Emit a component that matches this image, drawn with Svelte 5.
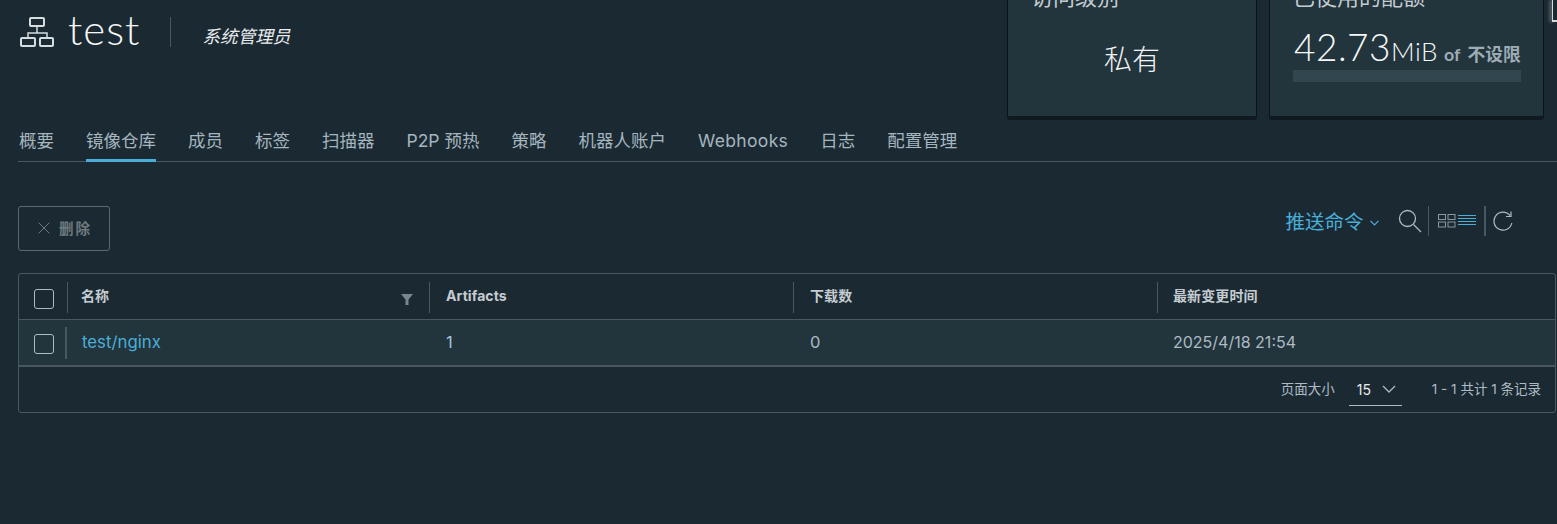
<script>
  const tabs = ['概要', '镜像仓库', '成员', '标签', '扫描器', 'P2P 预热', '策略', '机器人账户', 'Webhooks', '日志', '配置管理'];
  const rows = [{ name: 'test/nginx', artifacts: 1, pulls: 0, time: '2025/4/18 21:54' }];
</script>

<div class="page">
  <header class="head">
    <div class="title">
      <svg class="project-icon" width="34" height="30" viewBox="0 0 34 30" fill="none" stroke="#d5dde0" stroke-width="2">
        <rect x="10" y="1" width="14" height="8" rx="1" />
        <rect x="1" y="21" width="14" height="8" rx="1" />
        <rect x="20" y="21" width="13" height="8" rx="1" />
        <path d="M17 9v7M8 21v-5h19v5" stroke-width="1.500" />
      </svg>
      <h1>test</h1>
      <span class="sep"></span>
      <span class="role">系统管理员</span>
    </div>
    <div class="cards">
      <div class="card access">
        <div class="card-label">访问级别</div>
        <div class="card-value">私有</div>
      </div>
      <div class="card quota">
        <div class="card-label">已使用的配额</div>
        <div class="usage"><span class="num">42.73</span><span class="unit">MiB</span> <span class="of">of</span> <span class="limit">不设限</span></div>
        <div class="bar"></div>
      </div>
    </div>
    <div class="corner"></div>
  </header>

  <nav class="tabs">
    {#each tabs as t, i}
      <span class="tab" class:active={i === 1} class:latin={t === 'Webhooks'}>{t}</span>
    {/each}
  </nav>

  <div class="toolbar">
    <button class="del" disabled>
      <svg width="12" height="12" viewBox="0 0 12 12" stroke="#6e7a80" stroke-width="1"><path d="M0.500 0.500l11 11M11.500 0.500l-11 11" /></svg>
      <span>删除</span>
    </button>
    <div class="tools">
      <span class="push">推送命令
        <svg width="9" height="6" viewBox="0 0 9 6" fill="none" stroke="#4aaed9" stroke-width="1.200"><path d="M0.500 0.800l4 4 4-4" /></svg>
      </span>
      <svg class="search" width="24" height="24" viewBox="0 0 24 24" fill="none" stroke="#adbbc4" stroke-width="1.300"><circle cx="9.500" cy="9.500" r="8" /><path d="M15.500 15.500l7.500 7.500" /></svg>
      <span class="vr"></span>
      <svg class="grid" width="18" height="14" viewBox="0 0 18 14" fill="none" stroke="#8a979e" stroke-width="1"><rect x="0.500" y="0.500" width="7" height="5" /><rect x="10" y="0.500" width="7" height="5" /><rect x="0.500" y="8" width="7" height="5" /><rect x="10" y="8" width="7" height="5" /></svg>
      <svg class="list" width="18" height="14" viewBox="0 0 18 14" stroke="#4aaed9" stroke-width="1"><path d="M0 1.500h18M0 4.500h18M0 7.500h18M0 10.500h18" /></svg>
      <span class="vr wide"></span>
      <svg class="refresh" width="20" height="20" viewBox="0 0 20 20" fill="none" stroke="#adbbc4" stroke-width="1.200"><path d="M17 4.500A9 9 0 1 0 18.800 12" /><path d="M18 0.500v5h-5" /></svg>
    </div>
  </div>

  <div class="grid-wrap">
    <div class="row head-row">
      <div class="cell check"><span class="box"></span></div>
      <div class="cell name sepd">名称
        <svg class="filter" width="12" height="11" viewBox="0 0 12 11" fill="#7b868c"><path d="M0 0h12L7.500 5.500V11h-3V5.500z" /></svg>
      </div>
      <div class="cell col sepd">Artifacts</div>
      <div class="cell col sepd">下载数</div>
      <div class="cell col last sepd">最新变更时间</div>
    </div>
    {#each rows as r}
      <div class="row body-row">
        <div class="cell check"><span class="box"></span><span class="thick"></span></div>
        <div class="cell name link">{r.name}</div>
        <div class="cell col count">{r.artifacts}</div>
        <div class="cell col">{r.pulls}</div>
        <div class="cell col last">{r.time}</div>
      </div>
    {/each}
    <div class="foot">
      <span>页面大小</span>
      <span class="size">15
        <svg width="14" height="8" viewBox="0 0 14 8" fill="none" stroke="#adbbc4" stroke-width="1.300"><path d="M1 1l6 6 6-6" /></svg>
      </span>
      <span>1 - 1 共计 1 条记录</span>
    </div>
  </div>
</div>

<style>
  :global(body) {
    background: #1b2a32;
    overflow: hidden;
  }

  .page {
    height: 524px;
    padding: 0 0 0 18px;
    box-sizing: border-box;
    font-family: Inter, 'Noto Sans CJK SC', sans-serif;
    color: #adbbc4;
    overflow: hidden;
  }

  .head {
    height: 118px;
    display: flex;
    justify-content: space-between;
    position: relative;
  }

  .title {
    display: flex;
    align-items: flex-start;
    padding-top: 15px;
  }

  .project-icon {
    margin: 2px 0 0 2px;
  }

  h1 {
    margin: -3px 0 0 14px;
    font-family: Lato, 'Noto Sans CJK SC', sans-serif;
    font-size: 42px;
    font-weight: 300;
    line-height: 34px;
    color: #f5f7f8;
    letter-spacing: 1px;
  }

  .sep {
    width: 1px;
    height: 30px;
    margin: 2px 0 0 30px;
    background: #485860;
  }

  .role {
    margin: 10px 0 0 31px;
    font-size: 17.600px;
    font-style: italic;
    line-height: 24px;
    color: #e9ecef;
  }

  .cards {
    display: flex;
    gap: 12px;
    margin-right: 13px;
    margin-top: -24px;
    height: 141px;
  }

  .card {
    background: #22343c;
    border: 1px solid #0c1419;
    border-top: none;
    border-bottom: 4px solid #0f1a20;
    border-radius: 3px;
    box-sizing: border-box;
    height: 144px;
    padding: 0 23px;
  }

  .access {
    width: 250px;
  }

  .quota {
    width: 275px;
    padding: 0 22px 0 23px;
  }

  .card-label {
    font-size: 22px;
    line-height: 24px;
    margin-top: 9px;
    color: #c5ccd1;
    white-space: nowrap;
  }

  .card-value {
    margin-top: 31px;
    text-align: center;
    font-size: 28px;
    line-height: 40px;
    color: #f0f2f4;
    font-weight: 300;
  }

  .usage {
    margin-top: 18px;
    height: 43px;
    white-space: nowrap;
    line-height: 40px;
    font-family: Lato, 'Noto Sans CJK SC', sans-serif;
    color: #f5f7f8;
  }

  .num {
    margin-left: 1px;
    font-size: 37px;
    font-weight: 300;
    letter-spacing: 0.500px;
  }

  .unit {
    font-size: 26px;
    font-weight: 300;
    letter-spacing: 0.500px;
  }

  .of {
    margin-left: 2px;
  }

  .limit {
    margin-left: 3px;
  }

  .of, .limit {
    font-size: 17.800px;
    font-weight: 700;
    color: #9eacb5;
  }

  .bar {
    height: 12px;
    background: #324650;
  }

  .corner {
    position: absolute;
    right: 0;
    top: 0;
    width: 4px;
    height: 20px;
    border-left: 1px solid #d8d8d8;
    border-bottom: 2px solid #d8d8d8;
    box-shadow: -3px 0 3px rgba(216, 216, 216, 0.25);
  }

  .tabs {
    display: flex;
    gap: 32px;
    height: 43px;
    padding-left: 1px;
    border-bottom: 1px solid #485860;
  }

  .tab {
    height: 44px;
    box-sizing: border-box;
    font-size: 17.500px;
    line-height: 46px;
    color: #a5b5bf;
    white-space: nowrap;
  }

  .tab.latin {
    letter-spacing: 0.350px;
  }

  .tab.active {
    border-bottom: 3px solid #4aaed9;
  }

  .toolbar {
    display: flex;
    justify-content: space-between;
    align-items: flex-start;
    height: 67px;
    margin-top: 44px;
    padding-right: 44px;
  }

  .del {
    display: flex;
    align-items: center;
    gap: 9px;
    width: 92px;
    height: 45px;
    padding: 0 0 2px 19px;
    background: transparent;
    border: 1px solid #5b6a72;
    border-radius: 3px;
    font-family: inherit;
    font-size: 14.500px;
    font-weight: 600;
    letter-spacing: 2px;
    color: #6e7a80;
  }

  .tools {
    display: flex;
    align-items: center;
    height: 30px;
    margin-top: 0;
  }

  .push {
    font-size: 19.500px;
    color: #4aaed9;
    margin-right: 19px;
    margin-top: -2px;
  }

  .push svg {
    margin-left: 1px;
    vertical-align: 3px;
  }

  .search {
    margin-right: 6px;
  }

  .vr {
    width: 1px;
    height: 30px;
    background: #485860;
    margin-right: 9px;
  }

  .grid {
    margin-right: 2px;
  }

  .list {
    margin-right: 8px;
  }

  .vr.wide {
    width: 2px;
    margin-right: 7px;
  }

  .grid-wrap {
    margin-right: 1px;
    border: 1px solid #485860;
    border-radius: 3px;
  }

  .row {
    display: grid;
    grid-template-columns: 48px 362px 364px 364px 1fr;
    align-items: center;
  }

  .head-row {
    height: 45px;
    border-bottom: 1px solid #485860;
    font-size: 14px;
    font-weight: 700;
    letter-spacing: 0.100px;
    color: #c5ccd1;
  }

  .body-row {
    height: 45px;
    background: #22343c;
    border-bottom: 2px solid #485860;
    font-size: 16.500px;
    color: #adbbc4;
  }

  .cell {
    position: relative;
    display: flex;
    align-items: center;
    height: 100%;
    box-sizing: border-box;
    padding: 0 0 2px 17px;
    white-space: nowrap;
  }

  .head-row .cell {
    padding-bottom: 3px;
  }

  .cell.name {
    padding-left: 14px;
  }

  .body-row .cell.name {
    padding-left: 15px;
    font-size: 16.800px;
  }

  .cell.last {
    padding-left: 16px;
    font-size: 16px;
  }

  .head-row .cell.last {
    font-size: 14px;
  }

  .cell.check {
    padding: 0 0 0 15px;
  }

  .head-row .check {
    padding-top: 4px;
  }

  .body-row .check {
    padding-top: 2px;
  }

  .sepd::before {
    content: '';
    position: absolute;
    left: 0;
    top: 8px;
    height: 31px;
    width: 1px;
    background: #485860;
  }

  .thick {
    position: absolute;
    left: 46px;
    top: 7px;
    height: 32px;
    width: 2px;
    background: #485860;
  }

  .box {
    width: 18px;
    height: 18px;
    border: 1px solid #adbbc4;
    border-radius: 3px;
  }

  .filter {
    position: absolute;
    right: 16px;
    top: 20px;
  }

  .link {
    color: #4aaed9;
  }

  .count {
    color: #a5c5d8;
  }

  .foot {
    display: flex;
    justify-content: flex-end;
    align-items: center;
    gap: 14px;
    height: 45px;
    padding: 0 14px 3px 0;
    box-sizing: border-box;
    font-size: 13.500px;
    color: #adbbc4;
  }

  .size {
    display: flex;
    align-items: center;
    justify-content: space-between;
    align-self: flex-start;
    width: 53px;
    height: 33px;
    margin: 6px 16px 0 0;
    box-sizing: border-box;
    padding: 0 6px 0 8px;
    border-bottom: 1px solid #adbbc4;
    color: #e9ecef;
    font-size: 14px;
  }
</style>
